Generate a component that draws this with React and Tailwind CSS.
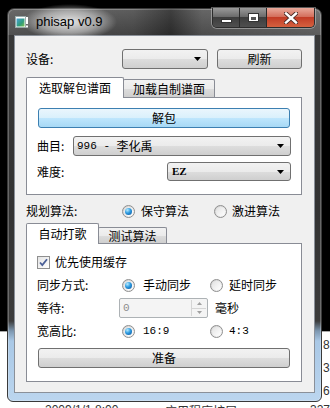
import React from "react";

const cjk = "font-['Noto_Sans_CJK_SC','Liberation_Sans',sans-serif]";
const mono = "font-['Liberation_Mono','Noto_Sans_CJK_SC',monospace]";

function Arrow() {
  return (
    <svg width="7" height="4" viewBox="0 0 7 4" className="shrink-0">
      <path d="M0 0h7L3.5 4z" fill="#000" />
    </svg>
  );
}

function Combo({ className = "", children }) {
  return (
    <div
      className={`flex items-center pl-[3px] pr-[6px] rounded-[3px] border border-[#707070] bg-[linear-gradient(to_bottom,#f2f2f2_0%,#ebebeb_50%,#dddddd_51%,#cfcfcf_100%)] ${className}`}
    >
      <div className="flex-1 flex items-center overflow-hidden whitespace-pre">{children}</div>
      <Arrow />
    </div>
  );
}

function Button({ children, className = "", active = false }) {
  return (
    <div
      className={`flex items-center justify-center rounded-[3px] border text-[12px] ${
        active
          ? "border-[#3c7fb1] bg-[linear-gradient(to_bottom,#eaf6fd_0%,#d9f0fc_50%,#bee6fd_51%,#a7d9f5_100%)]"
          : "border-[#707070] bg-[linear-gradient(to_bottom,#f2f2f2_0%,#ebebeb_50%,#dddddd_51%,#cfcfcf_100%)]"
      } ${className}`}
    >
      {children}
    </div>
  );
}

function Radio({ checked }) {
  return (
    <span className="w-[13px] h-[13px] shrink-0 rounded-full border border-[#8f8f8f] bg-[linear-gradient(135deg,#cfcfcf,#fbfbfb)] flex items-center justify-center">
      <span className="w-[9px] h-[9px] rounded-full bg-[linear-gradient(135deg,#e2e2e2,#ffffff)] flex items-center justify-center">
        {checked && (
          <span className="w-[7px] h-[7px] rounded-full bg-[radial-gradient(circle_at_35%_30%,#b8ecff_0%,#2c9ae0_45%,#0a4f96_100%)]" />
        )}
      </span>
    </span>
  );
}

function Check() {
  return (
    <span className="w-[13px] h-[13px] shrink-0 border border-[#8f8f8f] bg-[linear-gradient(135deg,#e4e4e4,#ffffff)] flex items-center justify-center">
      <svg width="9" height="9" viewBox="0 0 9 9">
        <path d="M1 4.5l2.3 2.5L8 1.2" stroke="#4a5f97" strokeWidth="1.8" fill="none" />
      </svg>
    </span>
  );
}

function RadioItem({ checked, label, width, gap = "ml-[8px]", labelClass = "" }) {
  return (
    <div className={`flex items-center ${width}`}>
      <Radio checked={checked} />
      <span className={`${gap} ${labelClass}`}>{label}</span>
    </div>
  );
}

function TabBar({ tabs }) {
  return (
    <div className="flex items-end h-[20px] relative z-10">
      {tabs.map((t, i) =>
        i === 0 ? (
          <div
            key={t.label}
            className={`${t.w} h-[21px] -mb-px flex items-center justify-center border border-b-0 border-[#898c95] rounded-t-[2px] bg-white`}
          >
            {t.label}
          </div>
        ) : (
          <div
            key={t.label}
            className={`${t.w} ${t.h} -ml-px flex items-center justify-center border border-b-0 border-[#898c95] rounded-t-[2px] bg-[linear-gradient(to_bottom,#f2f2f2_0%,#ebebeb_50%,#dddddd_51%,#cfcfcf_100%)]`}
          >
            {t.label}
          </div>
        )
      )}
    </div>
  );
}

function CaptionButtons() {
  return (
    <div className="absolute right-[6px] top-[-1px] flex h-[20px] rounded-b-[5px] border border-[#2c2c2c] border-t-0 shadow-[0_0_0_1px_rgba(255,255,255,0.35)] overflow-hidden">
      <div className="w-[27px] flex items-center justify-center border-r border-[#2a2a2a] bg-[linear-gradient(to_bottom,#9a9a9a_0%,#6c6c6c_45%,#3e3e3e_50%,#4f4f4f_100%)]">
        <div className="w-[11px] h-[4px] mt-[6px] bg-white border border-[#333]" />
      </div>
      <div className="w-[27px] flex items-center justify-center border-r border-[#2a2a2a] bg-[linear-gradient(to_bottom,#9a9a9a_0%,#6c6c6c_45%,#3e3e3e_50%,#4f4f4f_100%)]">
        <div className="w-[11px] h-[9px] border-[#333] border bg-white flex items-end justify-center pb-[1px]">
          <div className="w-[5px] h-[3px] bg-[#555]" />
        </div>
      </div>
      <div className="w-[47px] flex items-center justify-center bg-[linear-gradient(to_bottom,#e9a99b_0%,#d4705d_45%,#c23c26_50%,#d5613f_100%)]">
        <svg width="14" height="12" viewBox="0 0 14 12">
          <path d="M2 1.5l10 9M12 1.5l-10 9" stroke="#4b2a26" strokeWidth="4.2" strokeLinecap="square" />
          <path d="M2 1.5l10 9M12 1.5l-10 9" stroke="#fff" strokeWidth="2.4" strokeLinecap="square" />
        </svg>
      </div>
    </div>
  );
}

function AppIcon() {
  return (
    <svg width="13" height="12" viewBox="0 0 13 12" className="shrink-0">
      <defs>
        <linearGradient id="ic" x1="0" y1="0" x2="1" y2="1">
          <stop offset="0" stopColor="#4aa2d8" />
          <stop offset="0.6" stopColor="#2f9c7a" />
          <stop offset="1" stopColor="#7ac04a" />
        </linearGradient>
      </defs>
      <rect x="0.5" y="0.5" width="10" height="11" fill="#fff" stroke="#9aa" />
      <rect x="1.5" y="2.5" width="8" height="8" fill="url(#ic)" />
      <rect x="11" y="1" width="2" height="7" fill="#fff" />
      <rect x="11" y="9.5" width="2" height="2" fill="#fff" />
    </svg>
  );
}

function Desktop() {
  return (
    <div className="absolute left-0 right-0 top-[331px] bottom-0 bg-white border-t border-[#a8a8a8] font-['Liberation_Sans','Noto_Sans_CJK_SC',sans-serif] text-[12px] text-[#333]">
      <div className="absolute left-[323px] top-[6px] flex flex-col gap-[8px] leading-[15px]">
        <span>8</span>
        <span>3</span>
        <span>6</span>
      </div>
      <div className="absolute left-[45px] top-[71px] flex leading-[15px] whitespace-nowrap">
        <span className="w-[120px]">2009/1/1 8:00</span>
        <span className={`w-[145px] ${cjk}`}>应用程序扩展</span>
        <span>327</span>
      </div>
    </div>
  );
}

function Window() {
  return (
    <div className="absolute left-[7px] top-[8px] w-[315px] h-[394px] rounded-t-[7px] rounded-b-[6px] border border-[#3a3a3a] flex flex-col bg-[linear-gradient(to_bottom,#555_0px,#383838_26px,#333_200px,#3c3c3c_312px,#7d97b0_322px,#a9c8e6_332px,#bcd6ef_394px)] shadow-[inset_0_0_0_1px_rgba(255,255,255,0.25)]">
      {/* title bar */}
      <div className="relative h-[26px] shrink-0 flex items-center pl-[7px] bg-[linear-gradient(to_right,rgba(255,255,255,0.12)_0%,rgba(255,255,255,0.05)_40%,rgba(0,0,0,0.25)_52%,rgba(255,255,255,0.1)_62%,rgba(255,255,255,0.18)_100%)] rounded-t-[6px]">
        <AppIcon />
        <div className="ml-[8px] relative flex items-center">
          <div className="absolute -inset-x-[14px] -inset-y-[8px] rounded-full bg-[radial-gradient(closest-side,rgba(255,255,255,0.85),rgba(255,255,255,0.45)_60%,rgba(255,255,255,0)_100%)]" />
          <span className="relative font-['Liberation_Sans',sans-serif] text-[13px] text-black">phisap v0.9</span>
        </div>
        <CaptionButtons />
      </div>

      {/* client area */}
      <div className={`mx-[6px] h-[358px] shrink-0 bg-[#f0f0f0] border border-[#8a9099] flex flex-col pt-[13px] pl-[11px] pr-[12px] text-[12px] leading-none text-black ${cjk}`}>
        {/* device row */}
        <div className="flex items-center h-[20px]">
          <span className="flex-1">设备:</span>
          <Combo className="w-[86px] h-[20px]" />
          <Button className="w-[85px] h-[20px] ml-[9px]">刷新</Button>
        </div>

        {/* tabs 1 */}
        <div className="mt-[8px]">
          <TabBar
            tabs={[
              { label: "选取解包谱面", w: "w-[98px]" },
              { label: "加载自制谱面", w: "w-[92px]", h: "h-[18px]" },
            ]}
          />
          <div className="border border-[#898c95] bg-white flex flex-col pt-[10px] pb-[13px] px-[10px]">
            <Button active className="h-[20px] mx-[1px]">解包</Button>
            <div className="flex items-center mt-[8px] h-[20px]">
              <span className="w-[36px]">曲目:</span>
              <Combo className="flex-1 h-[20px]">
                <span className={`${mono} text-[11px]`}>996 - </span>
                <span>李化禹</span>
              </Combo>
            </div>
            <div className="flex items-center mt-[6px] h-[19px]">
              <span className="flex-1">难度:</span>
              <Combo className="w-[124px] h-[19px]">
                <span className="font-['Liberation_Serif',serif] font-bold text-[11px] ml-[1px]">EZ</span>
              </Combo>
            </div>
          </div>
        </div>

        {/* planning algorithm */}
        <div className="flex items-center h-[16px] mt-[8px]">
          <span className="w-[96px]">规划算法:</span>
          <RadioItem checked label="保守算法" width="w-[92px]" gap="ml-[6px]" />
          <RadioItem label="激进算法" width="" gap="ml-[5px]" />
        </div>

        {/* tabs 2 */}
        <div className="mt-[4px]">
          <TabBar
            tabs={[
              { label: "自动打歌", w: "w-[73px]" },
              { label: "测试算法", w: "w-[69px]", h: "h-[16px]" },
            ]}
          />
          <div className="border border-[#898c95] bg-white flex flex-col pt-[10px] pb-[13px] px-[10px]">
            <div className="flex items-center h-[16px]">
              <Check />
              <span className="ml-[5px]">优先使用缓存</span>
            </div>
            <div className="flex items-center h-[16px] mt-[7px]">
              <span className="w-[85px]">同步方式:</span>
              <RadioItem checked label="手动同步" width="w-[88px]" />
              <RadioItem label="延时同步" width="" gap="ml-[6px]" />
            </div>
            <div className="flex items-center h-[20px] mt-[5px]">
              <span className="w-[82px]">等待:</span>
              <div className="w-[89px] h-[20px] flex border border-[#adb2b5] bg-[#f4f4f4] rounded-[2px]">
                <span className={`flex-1 flex items-center pl-[3px] text-[#8d8d8d] ${mono} text-[11px]`}>0</span>
                <div className="w-[15px] flex flex-col border-l border-[#d5d5d5] m-[1px]">
                  <div className="flex-1 flex items-center justify-center border-b border-[#d5d5d5]">
                    <svg width="5" height="3" viewBox="0 0 5 3"><path d="M0 3h5L2.5 0z" fill="#a0a0a0" /></svg>
                  </div>
                  <div className="flex-1 flex items-center justify-center">
                    <svg width="5" height="3" viewBox="0 0 5 3"><path d="M0 0h5L2.5 3z" fill="#a0a0a0" /></svg>
                  </div>
                </div>
              </div>
              <span className="ml-[7px]">毫秒</span>
            </div>
            <div className="flex items-center h-[16px] mt-[5px]">
              <span className="w-[85px]">宽高比:</span>
              <RadioItem checked label="16:9" width="w-[88px]" labelClass={`${mono} text-[11px]`} />
              <RadioItem label="4:3" width="" gap="ml-[6px]" labelClass={`${mono} text-[11px]`} />
            </div>
            <Button className="h-[20px] mx-[1px] mt-[9px]">准备</Button>
          </div>
        </div>
      </div>
    </div>
  );
}

export default function App() {
  return (
    <div className="relative w-[330px] h-[408px] overflow-hidden bg-black">
      <Desktop />
      <Window />
    </div>
  );
}
